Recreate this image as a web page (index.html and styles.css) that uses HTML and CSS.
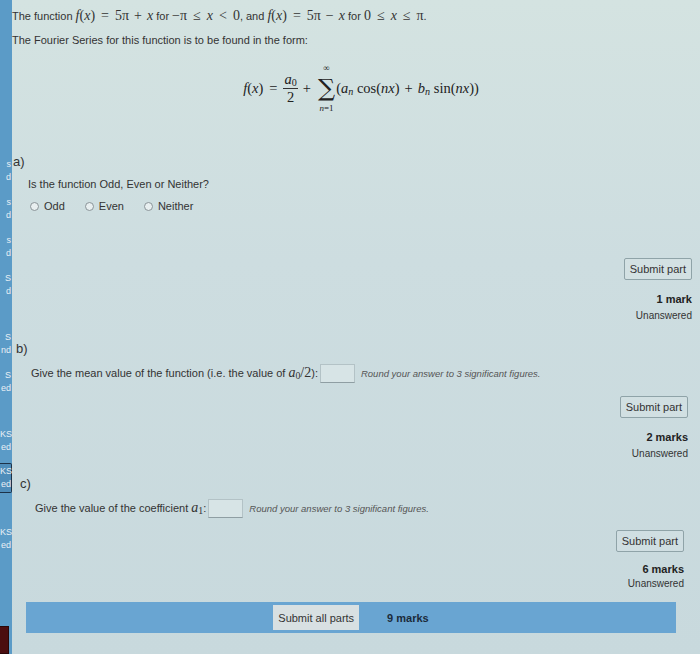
FILE: index.html
```html
<!DOCTYPE html>
<html lang="en">
<head>
<meta charset="utf-8">
<title>Fourier Series question</title>
<link rel="stylesheet" href="styles.css">
</head>
<body>
<div class="screen">
  <aside class="rail">
    <div class="rail-item">s<br>d</div>
    <div class="rail-item">s<br>d</div>
    <div class="rail-item">s<br>d</div>
    <div class="rail-item">S<br>d</div>
    <div class="rail-item rail-gap">S<br>nd</div>
    <div class="rail-item">S<br>ed</div>
    <div class="rail-item rail-gap">KS<br>ed</div>
    <div class="rail-item rail-current">KS<br>ed</div>
    <div class="rail-item rail-gap">KS<br>ed</div>
    <div class="rail-stop"></div>
  </aside>

  <main class="content">
    <p class="intro">The function <span class="m"><i>f</i>(<i>x</i>)<span class="rel">=</span>5π<span class="bin">+</span><i>x</i></span> for <span class="m">−π<span class="rel">≤</span><i>x</i><span class="rel">&lt;</span>0</span>, and <span class="m"><i>f</i>(<i>x</i>)<span class="rel">=</span>5π<span class="bin">−</span><i>x</i></span> for <span class="m">0<span class="rel">≤</span><i>x</i><span class="rel">≤</span>π</span>.</p>
    <p class="intro intro-second">The Fourier Series for this function is to be found in the form:</p>

    <div class="formula">
      <span><i>f</i>(<i>x</i>)</span>
      <span class="rel">=</span>
      <span class="frac"><span class="num"><i>a</i><sub>0</sub></span><span class="den">2</span></span>
      <span class="bin">+</span>
      <span class="sum"><span class="lim">∞</span><span class="sig">∑</span><span class="lim"><i>n</i>=1</span></span>
      <span>(<i>a</i><sub><i>n</i></sub> cos(<i>nx</i>)</span><span class="bin">+</span><span><i>b</i><sub><i>n</i></sub> sin(<i>nx</i>))</span>
    </div>

    <section class="part part-a">
      <div class="part-label">a)</div>
      <p class="q">Is the function Odd, Even or Neither?</p>
      <div class="choices">
        <label class="choice"><span class="radio"></span>Odd</label>
        <label class="choice"><span class="radio"></span>Even</label>
        <label class="choice"><span class="radio"></span>Neither</label>
      </div>
      <div class="part-foot foot-a">
        <button class="btn">Submit part</button>
        <div class="marks">1 mark</div>
        <div class="status">Unanswered</div>
      </div>
    </section>

    <section class="part part-b">
      <div class="part-label">b)</div>
      <div class="q-row">
        <span>Give the mean value of the function (i.e. the value of <span class="m"><i>a</i><sub>0</sub>/2</span>):</span>
        <span class="answer"></span>
        <span class="hint">Round your answer to 3 significant figures.</span>
      </div>
      <div class="part-foot">
        <button class="btn">Submit part</button>
        <div class="marks">2 marks</div>
        <div class="status">Unanswered</div>
      </div>
    </section>

    <section class="part part-c">
      <div class="part-label">c)</div>
      <div class="q-row">
        <span>Give the value of the coefficient <span class="m"><i>a</i><sub>1</sub></span>:</span>
        <span class="answer"></span>
        <span class="hint">Round your answer to 3 significant figures.</span>
      </div>
      <div class="part-foot foot-c">
        <button class="btn">Submit part</button>
        <div class="marks">6 marks</div>
        <div class="status">Unanswered</div>
      </div>
    </section>

    <div class="submit-bar">
      <button class="btn-all">Submit all parts</button>
      <span class="total">9 marks</span>
    </div>
  </main>
</div>
</body>
</html>
```
FILE: styles.css
```css
html, body {
  margin: 0;
  height: 100%;
}
body {
  background: linear-gradient(180deg, #d4e3e1 0%, #cddde0 40%, #c8d9dd 100%);
  font-family: "Liberation Sans", Arial, sans-serif;
  font-size: 11px;
  color: #333;
}
.screen {
  display: flex;
  min-height: 654px;
}

/* left navigation rail (mostly off-screen) */
.rail {
  width: 12px;
  flex: none;
  background: #5b9bc7;
  display: flex;
  flex-direction: column;
  padding-top: 158px;
  box-sizing: border-box;
}
.rail-item {
  font-size: 9px;
  line-height: 13px;
  color: #e9f0f5;
  text-align: right;
  white-space: nowrap;
  margin-top: 12px;
  padding-right: 1px;
}
.rail-item:first-child { margin-top: 0; }
.rail-gap { margin-top: 33px; }
.rail-current {
  margin-top: 9px;
  border: 1px solid #1d3248;
  border-left: none;
  border-radius: 0 2px 2px 0;
  background: #4f8dba;
  padding: 1px 0 1px 0;
}
.rail-stop {
  margin-top: auto;
  width: 8px;
  height: 26px;
  background: #4b0d0f;
  border: 1px solid #2a0607;
  border-left: none;
}

.content {
  flex: 1;
  padding: 9px 0 0 0;
}

.intro {
  margin: 0;
  line-height: 14px;
}
.intro-second { margin-top: 10px; }

.m {
  font-family: "Liberation Serif", "DejaVu Serif", serif;
  font-size: 14px;
}
.m i, .formula i { font-style: italic; }
.m sub, .formula sub {
  font-size: 70%;
  vertical-align: -2px;
  line-height: 0;
}
.intro .rel { margin: 0 6px; }
.intro .bin { margin: 0 5px; }
.rel { margin: 0 4px; }
.bin { margin: 0 3px; }

.formula {
  margin-top: 14px;
  height: 54px;
  display: flex;
  align-items: center;
  justify-content: center;
  padding-left: 10px;
  font-family: "Liberation Serif", "DejaVu Serif", serif;
  font-size: 14.5px;
  color: #222;
}
.formula .rel { margin: 0 6px; }
.formula .bin { margin: 0 5px; }
.frac {
  display: inline-flex;
  flex-direction: column;
  align-items: center;
  line-height: 17px;
}
.frac .num {
  border-bottom: 1px solid #333;
  padding: 0 1px;
}
.sum {
  display: inline-flex;
  flex-direction: column;
  align-items: center;
  margin: 0 1px 0 2px;
}
.sum .lim {
  font-size: 9px;
  line-height: 10px;
}
.sum .sig {
  font-family: "DejaVu Serif", serif;
  font-size: 24px;
  line-height: 30px;
}

/* question parts */
.part-label {
  font-size: 13px;
  line-height: 16px;
  color: #333;
}
.part-a { margin-top: 39px; padding: 0 8px 0 1px; }
.part-b { margin-top: 18px; padding: 0 12px 0 4px; }
.part-c { margin-top: 15px; padding: 0 16px 0 8px; }

.q {
  margin: 7px 0 0 15px;
  line-height: 14px;
}
.choices {
  display: flex;
  gap: 20px;
  margin: 8px 0 0 17px;
  line-height: 14px;
}
.choice {
  display: flex;
  align-items: center;
  gap: 5px;
}
.radio {
  width: 7px;
  height: 7px;
  border: 1px solid #8a9498;
  border-radius: 50%;
  background: #e8eff0;
}

.q-row {
  display: flex;
  align-items: center;
  margin: 6px 0 0 15px;
  height: 20px;
}
.answer {
  width: 33px;
  height: 17px;
  margin: 0 6px 0 2px;
  border: 1px solid #b3c2c6;
  border-bottom-color: #8f9ea3;
  background: #d7e4e6;
}
.hint {
  font-style: italic;
  font-size: 9.5px;
  color: #555;
}

.part-foot {
  display: flex;
  flex-direction: column;
  align-items: flex-end;
  margin-top: 13px;
}
.foot-a { margin-top: 45px; }
.foot-c { margin-top: 12px; }
.btn {
  font: inherit;
  color: #333;
  height: 22px;
  padding: 0 5px;
  background: rgba(255, 255, 255, 0.12);
  border: 1px solid #8fa3a8;
  border-radius: 2px;
}
.marks {
  margin-top: 12px;
  font-weight: bold;
  line-height: 14px;
  color: #222;
}
.status {
  margin-top: 3px;
  font-size: 10px;
  line-height: 14px;
  color: #333;
}
.foot-c .marks { margin-top: 10px; }
.foot-c .status { margin-top: 1px; }

.submit-bar {
  margin: 11px 24px 0 14px;
  height: 31px;
  background: #69a5d2;
  display: flex;
  align-items: center;
  justify-content: center;
  gap: 28px;
}
.btn-all {
  font: inherit;
  color: #333;
  height: 25px;
  padding: 0 5px;
  border: none;
  background: #d8e0e2;
}
.total {
  font-weight: bold;
  color: #1b2b3b;
  margin-right: 0;
}
```
